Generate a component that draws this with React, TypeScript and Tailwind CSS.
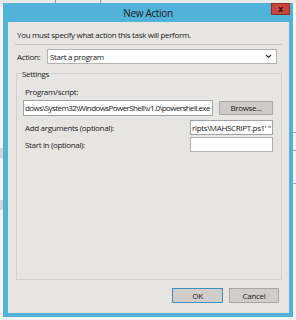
import React from "react";

const font = { fontFamily: '"Open Sans", "Noto Sans", sans-serif' };

export default function App() {
  return (
    <div
      className="relative w-[296px] h-[320px] overflow-hidden bg-[#f3f3f3] p-[3px]"
      style={font}
    >
      {/* background window remnants */}
      <div className="absolute left-0 top-0 w-[296px] h-[3px] bg-[#e9e9e9]" />
      <div className="absolute left-[55px] top-0 w-px h-[3px] bg-[#9a9a9a]" />
      <div className="absolute left-[100px] top-0 w-px h-[3px] bg-[#9a9a9a]" />
      <div className="absolute left-[293px] top-[132px] w-[3px] h-px bg-[#a8a8a8]" />
      <div className="absolute left-[293px] top-[150px] w-[3px] h-px bg-[#a8a8a8]" />
      <div className="absolute left-[293px] top-[183px] w-[3px] h-px bg-[#a8a8a8]" />
      <div className="absolute left-0 top-[148px] w-[3px] h-[10px] bg-[#d6d6d6]" />
      <div className="absolute left-0 top-[200px] w-[3px] h-[10px] bg-[#d6d6d6]" />

      <div className="relative flex flex-col w-[290px] h-[314px] bg-[#52b3da]">
        {/* title bar */}
        <div className="relative h-[19px] flex items-center justify-center">
          <span className="text-[10px] tracking-[-0.35px] text-[#1a1a1a] leading-none">New Action</span>
          <div className="absolute right-[3px] top-0 w-[19px] h-[12px] bg-[#c7453a] border border-[#8e2e25] flex items-center justify-center">
            <span className="text-[8px] font-bold text-[#1a1a1a] leading-none">x</span>
          </div>
        </div>

        {/* client area */}
        <div className="flex flex-col ml-[5px] mr-[4px] mb-[4px] flex-1 bg-[#e7e5e2] text-[8px] tracking-[-0.33px] text-[#222]">
          <div className="mt-[7px] ml-[9px] h-[11px] leading-[11px]">
            You must specify what action this task will perform.
          </div>
          <div className="mt-[4px] mx-[7px] h-px bg-[#c9c7c3]" />

          <div className="mt-[4px] flex items-center h-[15px]">
            <span className="ml-[9px] w-[30px]">Action:</span>
            <div className="w-[230px] h-[15px] bg-white border border-[#b5b3b0] flex items-center justify-between px-[2px]">
              <span>Start a program</span>
              <svg width="7" height="5" viewBox="0 0 7 5" className="mr-[2px]">
                <path d="M1 1 L3.5 3.5 L6 1" stroke="#333" strokeWidth="1.2" fill="none" />
              </svg>
            </div>
          </div>

          <fieldset className="mt-[5px] ml-[8px] w-[266px] h-[211px] border border-[#d3d1cd] px-[8px]">
            <legend className="ml-[-4px] px-[1px] leading-[9px]">Settings</legend>
            <div className="mt-[9px] leading-[9px]">Program/script:</div>
            <div className="mt-[4px] flex items-center ml-[-2px]">
              <div className="w-[190px] h-[16px] bg-white border border-[#9fa4a8] overflow-hidden whitespace-nowrap flex items-center pl-[1px] tracking-[-0.58px]">
                dows\System32\WindowsPowerShell\v1.0\powershell.exe
              </div>
              <div className="ml-[6px] w-[54px] h-[14px] bg-[#cdcac7] border border-[#a9a6a3] flex items-center justify-center">
                Browse...
              </div>
            </div>
            <div className="mt-[4px] flex items-center h-[15px]">
              <span className="w-[165px]">Add arguments (optional):</span>
              <div className="w-[83px] h-[15px] bg-white border border-[#9fa4a8] overflow-hidden whitespace-nowrap flex items-center pl-[1px]">
                ripts\MAHSCRIPT.ps1' "
              </div>
            </div>
            <div className="mt-[2px] flex items-center h-[15px]">
              <span className="w-[165px]">Start in (optional):</span>
              <div className="w-[83px] h-[15px] bg-white border border-[#b0b0b0]" />
            </div>
          </fieldset>

          <div className="mt-[8px] flex justify-end mr-[10px] gap-[6px]">
            <div className="w-[51px] h-[15px] bg-[#d0cdca] border border-[#3d8fc4] flex items-center justify-center">
              OK
            </div>
            <div className="w-[50px] h-[15px] bg-[#d0cdca] border border-[#a9a6a3] flex items-center justify-center">
              Cancel
            </div>
          </div>
        </div>
      </div>
    </div>
  );
}
